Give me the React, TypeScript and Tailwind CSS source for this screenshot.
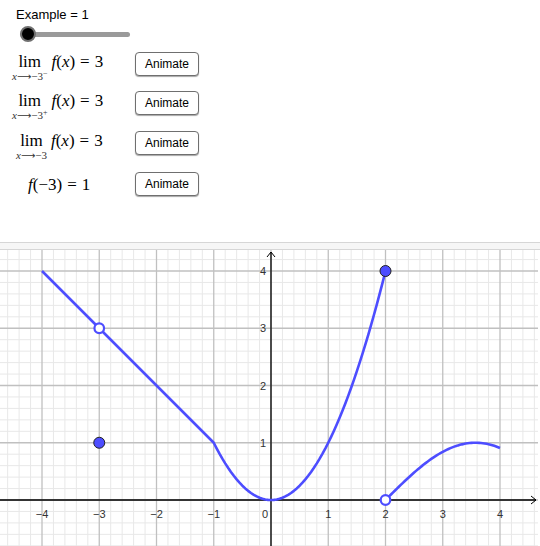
import React from "react";

const U = 57.25;
const OX = 271;
const OY = 250;
const W = 538;
const H = 296;
const BLUE = "#4d4dff";

const sx = (x: number) => OX + x * U;
const sy = (y: number) => OY - y * U;

function sample(f: (x: number) => number, a: number, b: number, n = 60) {
  const pts: string[] = [];
  for (let i = 0; i <= n; i++) {
    const x = a + ((b - a) * i) / n;
    pts.push(`${sx(x).toFixed(2)},${sy(f(x)).toFixed(2)}`);
  }
  return pts;
}

function Graph() {
  const vLines: { p: number; major: boolean }[] = [];
  for (let i = -25; i <= 25; i++) {
    const p = OX + (i * U) / 5;
    if (p >= 0 && p <= W) vLines.push({ p, major: i % 5 === 0 });
  }
  const hLines: { p: number; major: boolean }[] = [];
  for (let j = -6; j <= 24; j++) {
    const p = OY - (j * U) / 5;
    if (p >= 0 && p <= H) hLines.push({ p, major: j % 5 === 0 });
  }

  const left = `M${sx(-4)},${sy(4)} L${sx(-1)},${sy(1)} L` + sample((x) => x * x, -1, 2).join(" L");
  const right = "M" + sample((x) => Math.sin(x - 2), 2, 4).join(" L");

  return (
    <svg width={W} height={H} className="block">
      {vLines.filter((l) => !l.major).map((l) => (
        <line key={"vm" + l.p} x1={l.p} x2={l.p} y1={0} y2={H} stroke="#e8e8e8" strokeWidth={1} />
      ))}
      {hLines.filter((l) => !l.major).map((l) => (
        <line key={"hm" + l.p} y1={l.p} y2={l.p} x1={0} x2={W} stroke="#e8e8e8" strokeWidth={1} />
      ))}
      {vLines.filter((l) => l.major).map((l) => (
        <line key={"vM" + l.p} x1={l.p} x2={l.p} y1={0} y2={H} stroke="#c0c0c0" strokeWidth={1.3} />
      ))}
      {hLines.filter((l) => l.major).map((l) => (
        <line key={"hM" + l.p} y1={l.p} y2={l.p} x1={0} x2={W} stroke="#c0c0c0" strokeWidth={1.3} />
      ))}

      {/* axes */}
      <line x1={0} x2={W - 2} y1={OY} y2={OY} stroke="#000" strokeWidth={1.3} />
      <line x1={OX} x2={OX} y1={2} y2={H} stroke="#000" strokeWidth={1.3} />
      <path d={`M${W - 7},${OY - 4} L${W - 2},${OY} L${W - 7},${OY + 4}`} fill="none" stroke="#000" strokeWidth={1} />
      <path d={`M${OX - 4},7 L${OX},2 L${OX + 4},7`} fill="none" stroke="#000" strokeWidth={1} />

      {/* tick labels */}
      <g fontFamily="'Liberation Sans', Arial, sans-serif" fontSize={11} fill="#333">
        {[-4, -3, -2, -1, 1, 2, 3, 4].map((x) => (
          <text key={"tx" + x} x={sx(x)} y={OY + 18} textAnchor="middle">
            {x < 0 ? "\u2212" + Math.abs(x) : x}
          </text>
        ))}
        <text x={OX - 6} y={OY + 18} textAnchor="middle">0</text>
        {[1, 2, 3, 4].map((y) => (
          <text key={"ty" + y} x={OX - 5} y={sy(y) + 4} textAnchor="end">{y}</text>
        ))}
      </g>

      {/* function */}
      <path d={left} fill="none" stroke={BLUE} strokeWidth={2.6} strokeLinejoin="round" />
      <path d={right} fill="none" stroke={BLUE} strokeWidth={2.6} />

      {/* points */}
      <circle cx={sx(-3)} cy={sy(3)} r={4.8} fill="#fff" stroke={BLUE} strokeWidth={2.2} />
      <circle cx={sx(2)} cy={sy(0)} r={4.8} fill="#fff" stroke={BLUE} strokeWidth={2.2} />
      <circle cx={sx(-3)} cy={sy(1)} r={5.5} fill={BLUE} stroke="#222" strokeWidth={1} />
      <circle cx={sx(2)} cy={sy(4)} r={5.5} fill={BLUE} stroke="#222" strokeWidth={1} />
    </svg>
  );
}

function Lim({ sub }: { sub: React.ReactNode }) {
  return (
    <span className="inline-flex flex-col items-center leading-none mr-[4px]">
      <span className="text-[17px] leading-[17px]">lim</span>
      <span className="text-[11px] leading-[11px] mt-[1px] text-[#333] whitespace-nowrap">{sub}</span>
    </span>
  );
}

function Arrow() {
  return <span className="font-['DejaVu_Sans',sans-serif] text-[10px]">⟶</span>;
}

function Fx() {
  return (
    <span className="text-[17px] leading-[17px] whitespace-nowrap">
      <i>f</i>(<i>x</i>)<span className="mx-[5px]">=</span>3
    </span>
  );
}

function AnimateButton() {
  return (
    <button className="w-[64px] h-[24px] rounded-[4px] border border-[#6f6f6f] bg-white shadow-[0_1px_1px_rgba(0,0,0,0.35)] text-[12px] text-black font-['Liberation_Sans',Arial,sans-serif] flex items-center justify-center">
      Animate
    </button>
  );
}

export default function App() {
  return (
    <div className="w-[540px] h-[546px] bg-white overflow-hidden font-['Liberation_Sans',Arial,sans-serif]">
      <div className="h-[242px] pt-[7px]">
        <div className="ml-[16px] text-[13px] leading-[16px] text-black">Example = 1</div>
        <div className="relative w-[110px] h-[16px] mt-[3px] ml-[20px]">
          <div className="absolute left-0 right-0 top-[6px] h-[5px] rounded-full bg-[#9a9a9a]" />
          <div className="absolute left-0 top-0 w-[16px] h-[16px] rounded-full bg-black border-2 border-[#707070]" />
        </div>

        <div className="font-['Liberation_Serif','Times_New_Roman',serif] text-black">
          <div className="flex items-center h-[39px] mt-[2px]">
            <div className="w-[135px] pl-[12px] flex items-baseline pt-[7px]">
              <Lim sub={<><i>x</i><Arrow />−3<sup className="text-[8px]">−</sup></>} />
              <Fx />
            </div>
            <AnimateButton />
          </div>
          <div className="flex items-center h-[39px]">
            <div className="w-[135px] pl-[12px] flex items-baseline pt-[7px]">
              <Lim sub={<><i>x</i><Arrow />−3<sup className="text-[8px]">+</sup></>} />
              <Fx />
            </div>
            <AnimateButton />
          </div>
          <div className="flex items-center h-[42px]">
            <div className="w-[135px] pl-[16px] flex items-baseline pt-[7px]">
              <Lim sub={<><i>x</i><Arrow />−3</>} />
              <Fx />
            </div>
            <AnimateButton />
          </div>
          <div className="flex items-center h-[40px]">
            <div className="w-[135px] pl-[28px] text-[17px] leading-[17px] whitespace-nowrap">
              <i>f</i>(−3)<span className="mx-[5px]">=</span>1
            </div>
            <AnimateButton />
          </div>
        </div>
      </div>
      <div className="h-[8px] bg-[#f6f6f6] border-t border-b border-[#d6d6d6]" />
      <Graph />
    </div>
  );
}
